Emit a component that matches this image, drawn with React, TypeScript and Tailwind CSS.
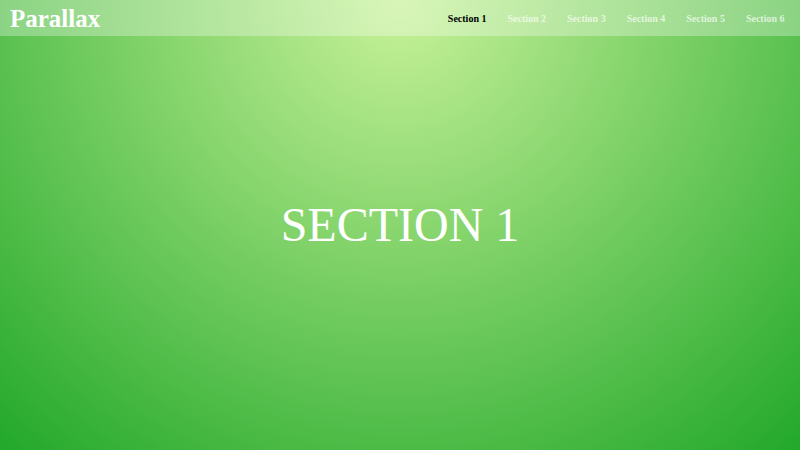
import React from 'react';

const sections = ['Section 1', 'Section 2', 'Section 3', 'Section 4', 'Section 5', 'Section 6'];

export default function App() {
  const active = 0;

  return (
    <div className="relative h-[450px] w-full overflow-hidden bg-[radial-gradient(circle_at_top,#c8f299,#22a82a)] font-['Liberation_Serif',serif]">
      {/* top bar sits over the section */}
      <header className="absolute inset-x-0 top-0 z-10 flex h-9 items-center justify-between bg-white/30 pl-[10px] pr-[5px]">
        <h1 className="text-[25px] font-bold leading-none text-white">Parallax</h1>
        <nav className="flex items-center">
          {sections.map((s, i) => (
            <a
              key={s}
              href="#"
              className={
                'px-[10.5px] text-[10px] font-bold ' +
                (i === active ? 'text-black' : 'text-white/70')
              }
            >
              {s}
            </a>
          ))}
        </nav>
      </header>

      <section className="flex h-full items-center justify-center">
        <h2 className="text-[48px] leading-none text-white">SECTION 1</h2>
      </section>
    </div>
  );
}
